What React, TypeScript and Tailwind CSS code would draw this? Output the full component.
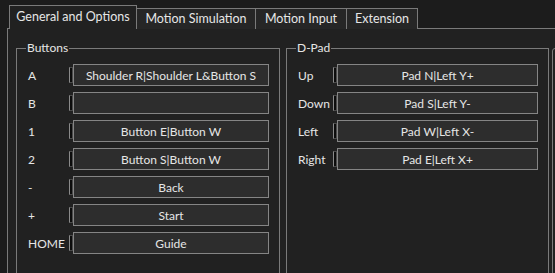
import React from 'react';

const buttonRows: [string, string][] = [
  ['A', 'Shoulder R|Shoulder L&Button S'],
  ['B', ''],
  ['1', 'Button E|Button W'],
  ['2', 'Button S|Button W'],
  ['-', 'Back'],
  ['+', 'Start'],
  ['HOME', 'Guide'],
];

const padRows: [string, string][] = [
  ['Up', 'Pad N|Left Y+'],
  ['Down', 'Pad S|Left Y-'],
  ['Left', 'Pad W|Left X-'],
  ['Right', 'Pad E|Left X+'],
];

const tabs: [string, string][] = [
  ['General and Options', 'w-[128px]'],
  ['Motion Simulation', 'w-[119px]'],
  ['Motion Input', 'w-[91px]'],
  ['Extension', 'w-[71px]'],
];

function MappingRow({ label, value, labelWidth }: { label: string; value: string; labelWidth: string }) {
  return (
    <div className="flex items-center h-[22px]">
      <span className={`${labelWidth} shrink-0 text-[#e6e6e6] pt-[1px]`}>{label}</span>
      <div className="w-[4px] h-[16px] shrink-0 bg-[#0c0c0c] border border-[#4a4a4a] border-l-[#8a8a8a]" />
      <div className="flex-1 h-[22px] bg-[#2d2d2d] border border-[#858585] flex items-center justify-center text-[#e6e6e6] whitespace-nowrap pt-[1px]">
        {value}
      </div>
    </div>
  );
}

function GroupBox({ title, className, children }: { title: string; className: string; children?: React.ReactNode }) {
  return (
    <div className={`relative border border-[#7a7a7a] shrink-0 ${className}`}>
      <span className="absolute left-[9px] -top-[9px] px-[1px] bg-[#212121] text-[#e6e6e6] leading-[16px]">{title}</span>
      {children}
    </div>
  );
}

export default function App() {
  return (
    <div
      className="w-[555px] h-[273px] overflow-hidden bg-[#1c1c1c] pt-[5px] pl-[7px] text-[12px]"
      style={{ fontFamily: 'Lato, "Noto Sans", sans-serif' }}
    >
      {/* Tabs */}
      <div className="flex items-end pl-[2px] relative z-10 -mb-[1px] text-[12.5px]">
        {tabs.map(([t, w], i) =>
          i === 0 ? (
            <div key={t} className={`h-[24px] ${w} border border-b-0 border-[#7a7a7a] bg-[#212121] flex items-center justify-center text-[#e6e6e6] whitespace-nowrap`}>
              {t}
            </div>
          ) : (
            <div key={t} className={`h-[21px] ${w} border border-l-0 border-b-0 border-[#7a7a7a] bg-[#262626] flex items-center justify-center text-[#e6e6e6] whitespace-nowrap pt-[1px]`}>
              {t}
            </div>
          )
        )}
      </div>

      {/* Tab pane */}
      <div className="w-[600px] h-[300px] border border-[#7a7a7a] bg-[#212121] pt-[19px] pl-[8px] flex gap-[6px]">
        <GroupBox title="Buttons" className="w-[264px] h-[260px] pt-[15px] pl-[11px] pr-[10px]">
          <div className="flex flex-col gap-[6px]">
            {buttonRows.map(([l, v]) => (
              <MappingRow key={l} label={l} value={v} labelWidth="w-[41px]" />
            ))}
          </div>
        </GroupBox>
        <GroupBox title="D-Pad" className="w-[263px] h-[260px] pt-[15px] pl-[11px] pr-[10px]">
          <div className="flex flex-col gap-[6px]">
            {padRows.map(([l, v]) => (
              <MappingRow key={l} label={l} value={v} labelWidth="w-[35px]" />
            ))}
          </div>
        </GroupBox>
        <div className="w-[100px] h-[260px] border border-[#7a7a7a] rounded-tl-[3px] -ml-[3px] shrink-0" />
      </div>
    </div>
  );
}
